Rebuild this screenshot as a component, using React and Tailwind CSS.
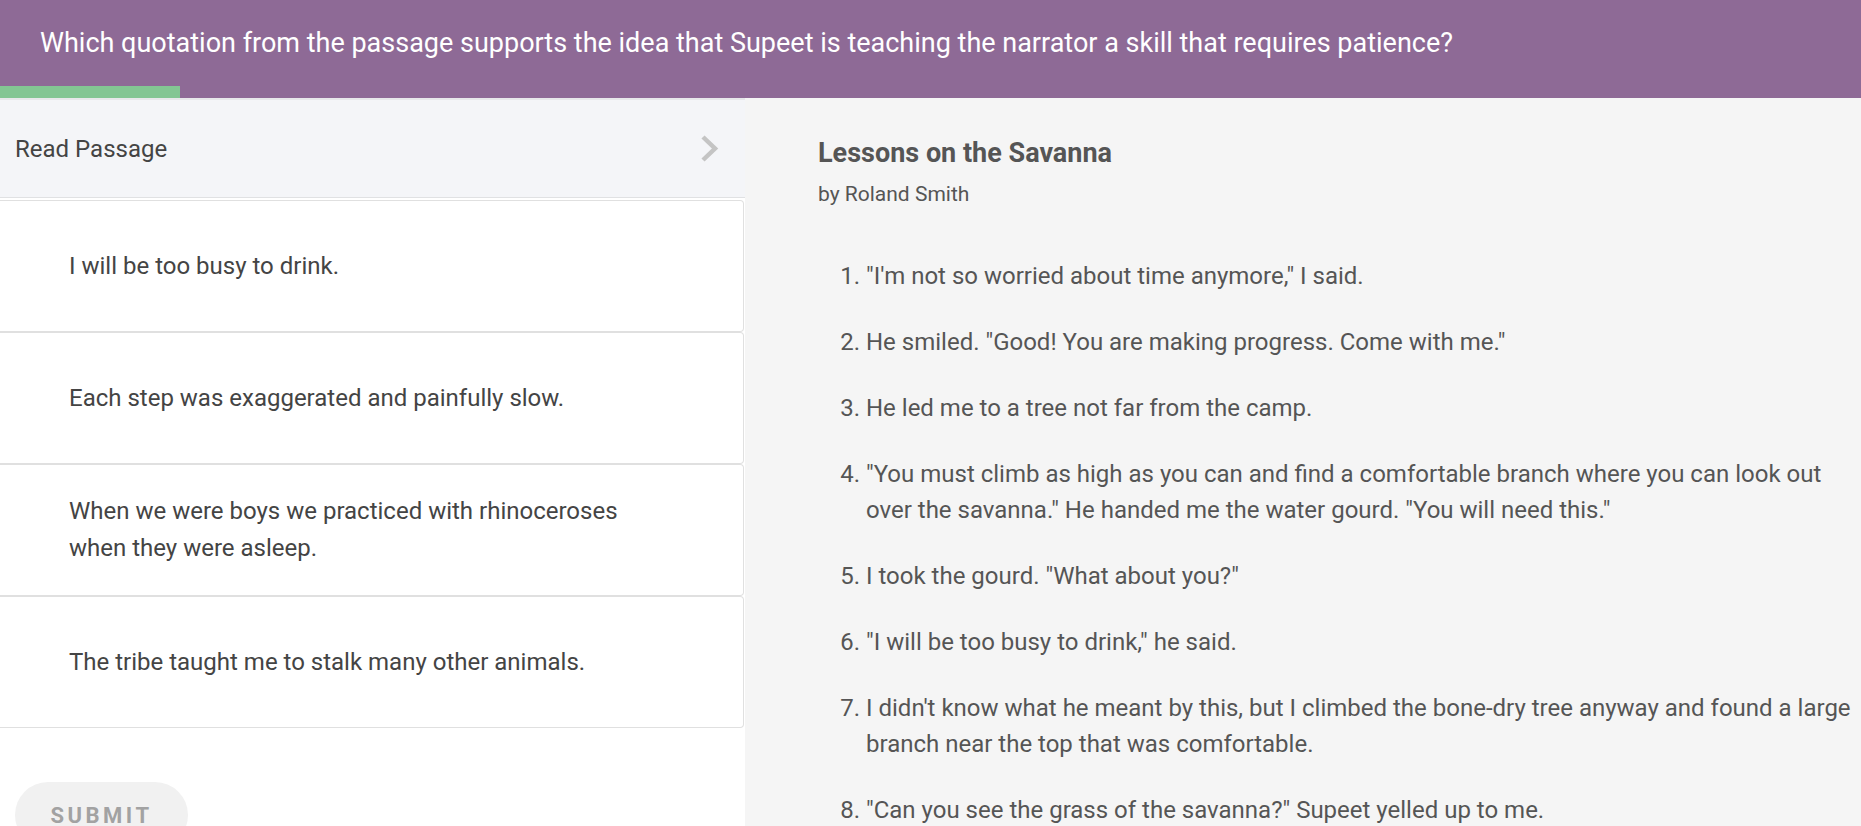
import React from "react";

const choices = [
  "I will be too busy to drink.",
  "Each step was exaggerated and painfully slow.",
  "When we were boys we practiced with rhinoceroses when they were asleep.",
  "The tribe taught me to stalk many other animals.",
];

const passage = [
  `"I'm not so worried about time anymore," I said.`,
  `He smiled. "Good! You are making progress. Come with me."`,
  `He led me to a tree not far from the camp.`,
  `"You must climb as high as you can and find a comfortable branch where you can look out over the savanna." He handed me the water gourd. "You will need this."`,
  `I took the gourd. "What about you?"`,
  `"I will be too busy to drink," he said.`,
  `I didn't know what he meant by this, but I climbed the bone-dry tree anyway and found a large branch near the top that was comfortable.`,
  `"Can you see the grass of the savanna?" Supeet yelled up to me.`,
];

export default function App() {
  return (
    <div
      className="w-[1861px] h-[826px] overflow-hidden flex flex-col bg-white"
      style={{ fontFamily: "Roboto, 'Noto Sans', 'Liberation Sans', sans-serif" }}
    >
      <header className="relative h-[98px] shrink-0 bg-[#8e6a96]">
        <h1 className="pl-[40px] pt-[23px] text-[27px] leading-[40px] font-normal text-white">
          Which quotation from the passage supports the idea that Supeet is teaching the narrator a skill that requires patience?
        </h1>
        <div className="absolute left-0 bottom-0 h-[12px] w-[180px] bg-[#83c693]" />
      </header>

      <div className="flex flex-1 min-h-0">
        <aside className="w-[745px] shrink-0 flex flex-col bg-white">
          <div className="h-[2px] shrink-0 bg-[#e7e8ea]" />
          <div className="h-[98px] shrink-0 flex items-center justify-between pl-[15px] pr-[26px] bg-[#f4f5f8] border-b border-[#e0e1e3]">
            <span className="text-[24px] text-[#444]">Read Passage</span>
            <svg width="19" height="27" viewBox="0 0 19 27" fill="none">
              <polyline
                points="3,2 15,13.5 3,25"
                stroke="#c4c4c4"
                strokeWidth="4.5"
                strokeLinejoin="miter"
              />
            </svg>
          </div>
          <div className="mt-[2px] shrink-0 flex flex-col w-[744px]">
            {choices.map((t, i) => (
              <div
                key={i}
                className="h-[132px] shrink-0 flex items-center pl-[69px] pr-[97px] bg-white border border-l-0 border-[#e0e0e0] rounded-r-[4px]"
              >
                <p className="text-[24px] leading-[37px] text-[#444]">{t}</p>
              </div>
            ))}
          </div>
          <div className="shrink-0 pt-[54px] pl-[15px]">
            <button className="w-[173px] h-[66px] rounded-full bg-[#f1f1f1] text-[22px] font-bold tracking-[3.5px] text-[#a2a2a2]">
              SUBMIT
            </button>
          </div>
        </aside>

        <main className="flex-1 bg-[#f5f5f5] pl-[73px] pr-[3px] pt-[37px]">
          <h2 className="text-[27px] leading-[36px] font-bold text-[#555]">Lessons on the Savanna</h2>
          <p className="mt-[8px] text-[21px] leading-[30px] text-[#555]">by Roland Smith</p>
          <ol className="mt-[49px] list-decimal pl-[48px] text-[24px] leading-[36px] text-[#555]">
            {passage.map((t, i) => (
              <li key={i} className="mb-[30px]">
                {t}
              </li>
            ))}
          </ol>
        </main>
      </div>
    </div>
  );
}
